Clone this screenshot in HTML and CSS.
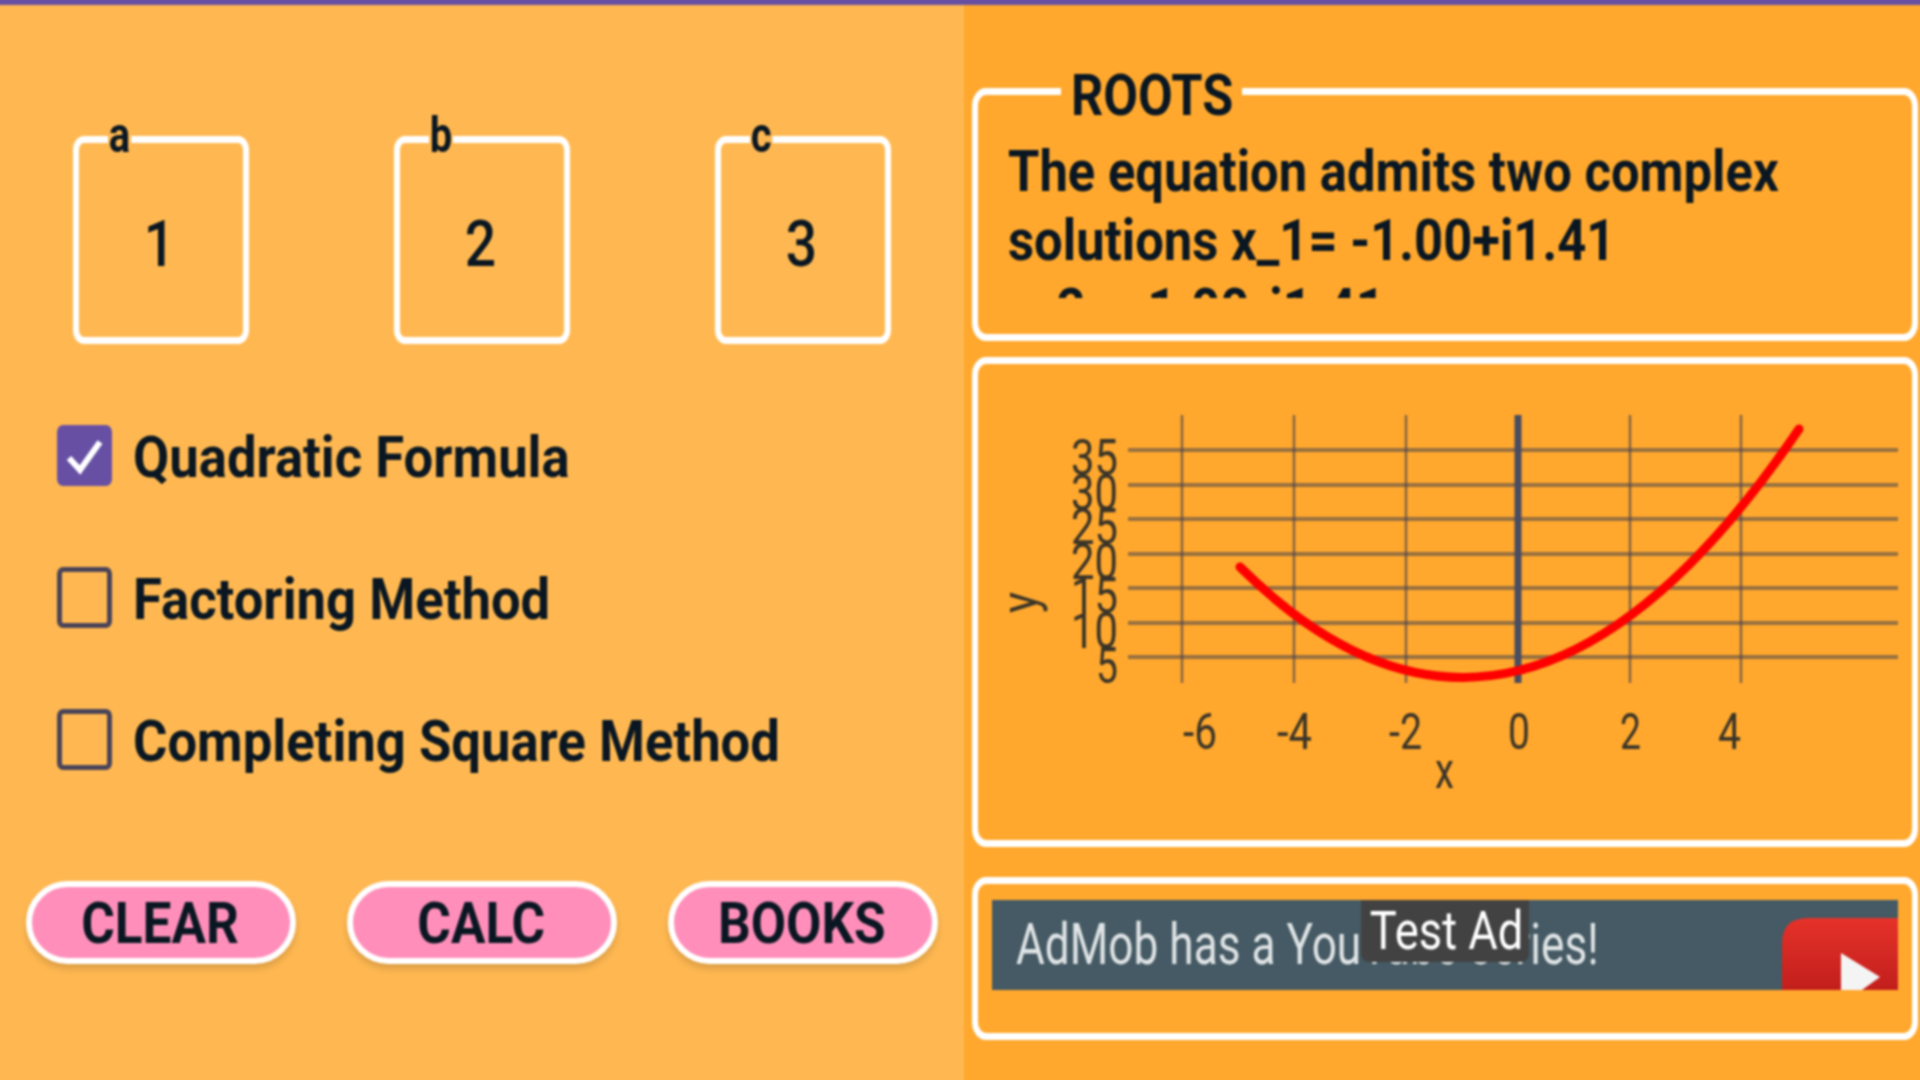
FILE: index.html
```html
<!DOCTYPE html>
<html lang="en">
<head>
    <meta charset="UTF-8">
    <title>Quadratic Equation Solver</title>
    <link rel="stylesheet" href="styles.css">
</head>
<body>
    <div class="app">
        <div class="top-bar"></div>
        <div class="main">
            <div class="left">
                <div class="inputs">
                    <div class="input-box">
                        <span class="input-label">a</span>
                        <span class="input-value">1</span>
                    </div>
                    <div class="input-box">
                        <span class="input-label">b</span>
                        <span class="input-value">2</span>
                    </div>
                    <div class="input-box">
                        <span class="input-label">c</span>
                        <span class="input-value">3</span>
                    </div>
                </div>
                <div class="methods">
                    <div class="method">
                        <span class="checkbox checked">
                            <svg width="45" height="51" viewBox="0 0 45 51"><path d="M7 28 L18 40 L38 12" fill="none" stroke="#fff" stroke-width="6"/></svg>
                        </span>
                        <span class="method-text">Quadratic Formula</span>
                    </div>
                    <div class="method">
                        <span class="checkbox"></span>
                        <span class="method-text">Factoring Method</span>
                    </div>
                    <div class="method">
                        <span class="checkbox"></span>
                        <span class="method-text">Completing Square Method</span>
                    </div>
                </div>
                <div class="buttons">
                    <div class="btn"><span class="btn-text">CLEAR</span></div>
                    <div class="btn"><span class="btn-text">CALC</span></div>
                    <div class="btn"><span class="btn-text">BOOKS</span></div>
                </div>
            </div>
            <div class="right">
                <div class="panel roots">
                    <span class="roots-title"><span class="roots-title-text">ROOTS</span></span>
                    <div class="roots-text">
                        <div class="roots-line">The equation admits two complex</div>
                        <div class="roots-line">solutions x_1= -1.00+i1.41</div>
                        <div class="roots-line">x_2= -1.00-i1.41</div>
                    </div>
                </div>
                <div class="panel graph">
                    <svg class="plot" viewBox="978 364 934 476">
                        <g class="grid-v">
                            <path d="M1182 415V683M1294 415V683M1406 415V683M1630 415V683M1741 415V683"/>
                        </g>
                        <g class="grid-h">
                            <path d="M1128 450H1898M1128 485H1898M1128 519H1898M1128 554H1898M1128 588H1898M1128 623H1898M1128 657H1898"/>
                        </g>
                        <path class="axis" d="M1518 415V683"/>
                        <path class="curve" d="M1240 567Q1518 843 1799 429"/>
                        <text class="tick" x="1071" y="475" textLength="47" lengthAdjust="spacingAndGlyphs">35</text>
                        <text class="tick" x="1071" y="510" textLength="47" lengthAdjust="spacingAndGlyphs">30</text>
                        <text class="tick" x="1071" y="544" textLength="47" lengthAdjust="spacingAndGlyphs">25</text>
                        <text class="tick" x="1071" y="579" textLength="47" lengthAdjust="spacingAndGlyphs">20</text>
                        <text class="tick" x="1071" y="613" textLength="47" lengthAdjust="spacingAndGlyphs">15</text>
                        <text class="tick" x="1071" y="648" textLength="47" lengthAdjust="spacingAndGlyphs">10</text>
                        <text class="tick" x="1096" y="683" textLength="22" lengthAdjust="spacingAndGlyphs">5</text>
                        <text class="tick" x="1183" y="749" textLength="34" lengthAdjust="spacingAndGlyphs">-6</text>
                        <text class="tick" x="1277" y="749" textLength="35" lengthAdjust="spacingAndGlyphs">-4</text>
                        <text class="tick" x="1389" y="749" textLength="33" lengthAdjust="spacingAndGlyphs">-2</text>
                        <text class="tick" x="1508" y="749" textLength="22" lengthAdjust="spacingAndGlyphs">0</text>
                        <text class="tick" x="1620" y="749" textLength="21" lengthAdjust="spacingAndGlyphs">2</text>
                        <text class="tick" x="1718" y="749" textLength="23" lengthAdjust="spacingAndGlyphs">4</text>
                        <text class="tick" x="1435" y="788" textLength="19" lengthAdjust="spacingAndGlyphs">x</text>
                        <text class="tick" transform="translate(1037 613) rotate(-90)" textLength="21" lengthAdjust="spacingAndGlyphs">y</text>
                    </svg>
                </div>
                <div class="panel ad-panel">
                    <div class="ad">
                        <span class="ad-text">AdMob has a YouTube series!</span>
                        <svg class="yt" width="116" height="72" viewBox="0 0 116 72">
                            <defs>
                                <linearGradient id="ytRed" x1="0" y1="0" x2="0" y2="1">
                                    <stop offset="0" stop-color="#e6322a"/>
                                    <stop offset="1" stop-color="#c21f1c"/>
                                </linearGradient>
                            </defs>
                            <path d="M0 72V26Q0 0 26 0H116V72Z" fill="url(#ytRed)"/>
                            <path d="M59 35L98 59L80 72H59Z" fill="#f4f4f4"/>
                        </svg>
                        <div class="test-ad"><span class="test-ad-text">Test Ad</span></div>
                    </div>
                </div>
            </div>
        </div>
    </div>
</body>
</html>
```

FILE: styles.css
```css
body, html {
    margin: 0;
    padding: 0;
    height: 100%;
    overflow: hidden;
    font-family: Roboto, "Liberation Sans", sans-serif;
    color: #0a1722;
}
/* 2px bleed on every side so the blur doesn't fade at the window edges */
.app {
    width: 1924px;
    height: 1084px;
    margin: -2px;
    display: flex;
    flex-direction: column;
    filter: blur(0.8px);
}
.top-bar {
    height: 7px;
    background: #6750a4;
}
.main {
    flex: 1;
    display: flex;
}

/* left side */
.left {
    width: 966px;
    background: #ffb851;
    padding: 131px 0 0 2px;
    box-sizing: border-box;
}
.inputs {
    display: flex;
    gap: 145px;
    padding-left: 73px;
}
.input-box {
    position: relative;
    width: 176px;
    height: 208px;
    box-sizing: border-box;
    border: solid #fff;
    border-width: 7px 6px;
    border-radius: 11px / 14px;
    display: flex;
    align-items: center;
    justify-content: center;
}
.input-label {
    position: absolute;
    top: -30px;
    left: 29px;
    padding: 0 1px;
    background: #ffb851;
    font-size: 50px;
    line-height: 44px;
    font-weight: 700;
    transform: scaleX(.8);
    transform-origin: left;
}
.input-value {
    font-size: 65px;
    font-weight: 500;
    transform: translate(-2px, 4px) scaleX(.85);
}
.methods {
    margin-top: 81px;
    padding-left: 57px;
    display: flex;
    flex-direction: column;
    gap: 81px;
}
.method {
    display: flex;
    align-items: center;
    gap: 21px;
    height: 61px;
}
.checkbox {
    width: 55px;
    height: 61px;
    box-sizing: border-box;
    border: solid #4a4458;
    border-width: 5px;
    border-radius: 6px / 7px;
}
.checkbox.checked {
    background: #6750a4;
    border-color: #6750a4;
}
.checkbox svg {
    display: block;
}
.method-text {
    font-size: 58px;
    font-weight: 700;
    white-space: nowrap;
    transform: translateY(1px) scaleX(.907);
    transform-origin: left;
}
.buttons {
    margin-top: 111px;
    padding-left: 26px;
    display: flex;
    gap: 51px;
}
.btn {
    width: 270px;
    height: 83px;
    box-sizing: border-box;
    border: solid #fff;
    border-width: 6px;
    border-radius: 42px / 42px;
    background: #ff8fba;
    box-shadow: 0 5px 7px rgba(0, 0, 0, 0.14);
    display: flex;
    align-items: center;
    justify-content: center;
}
.btn-text {
    font-size: 58px;
    font-weight: 700;
    transform: translateX(-1px) scaleX(.885);
}

/* right side */
.right {
    flex: 1;
    background: #ffa82d;
    padding: 83px 4px 0 8px;
    display: flex;
    flex-direction: column;
}
.panel {
    position: relative;
    box-sizing: border-box;
    border: solid #fff;
    border-width: 7px 6px;
    border-radius: 14px / 18px;
}
.roots {
    height: 253px;
    margin-bottom: 16px;
}
.roots-title {
    position: absolute;
    top: -29px;
    left: 83px;
    width: 181px;
    height: 50px;
    background: #ffa82d;
    text-align: left;
}
.roots-title-text {
    display: block;
    margin-left: 10px;
    font-size: 58px;
    line-height: 58px;
    font-weight: 700;
    white-space: nowrap;
    transform: scaleX(.87);
    transform-origin: left;
}
.roots-text {
    margin: 42px 0 0 30px;
    height: 161px;
    overflow: hidden;
}
.roots-line {
    font-size: 58px;
    line-height: 69px;
    font-weight: 700;
    white-space: nowrap;
    transform: scaleX(.875);
    transform-origin: left;
}
.graph {
    height: 490px;
    margin-bottom: 30px;
}
.plot {
    display: block;
    width: 100%;
    height: 100%;
}
.grid-v path {
    stroke: rgba(70, 65, 80, 0.65);
    stroke-width: 2.5;
    fill: none;
}
.grid-h path {
    stroke: rgba(70, 65, 80, 0.55);
    stroke-width: 4;
    fill: none;
}
.axis {
    stroke: #4a4c60;
    stroke-width: 7;
    fill: none;
}
.curve {
    stroke: #f00;
    stroke-width: 9;
    fill: none;
    stroke-linecap: round;
}
.tick {
    font-family: Roboto, sans-serif;
    font-size: 50px;
    fill: #3a3428;
}
.ad-panel {
    height: 163px;
    padding: 16px 14px 0 14px;
}
.ad {
    position: relative;
    height: 90px;
    background: #455a64;
    overflow: hidden;
}
.ad-text {
    position: absolute;
    left: 24px;
    top: 10px;
    font-size: 58px;
    line-height: 68px;
    color: #dfe3e5;
    white-space: nowrap;
    transform: scaleX(.762);
    transform-origin: left;
}
.yt {
    position: absolute;
    right: 0;
    bottom: 0;
}
.test-ad {
    position: absolute;
    top: 0;
    left: 369px;
    width: 168px;
    height: 62px;
    background: #424242;
    border-radius: 0 0 8px 8px;
}
.test-ad-text {
    display: block;
    margin-top: 2px;
    margin-left: -5px;
    color: #fff;
    font-size: 54px;
    line-height: 58px;
    white-space: nowrap;
    text-align: center;
    transform: scaleX(.84);
}
```
